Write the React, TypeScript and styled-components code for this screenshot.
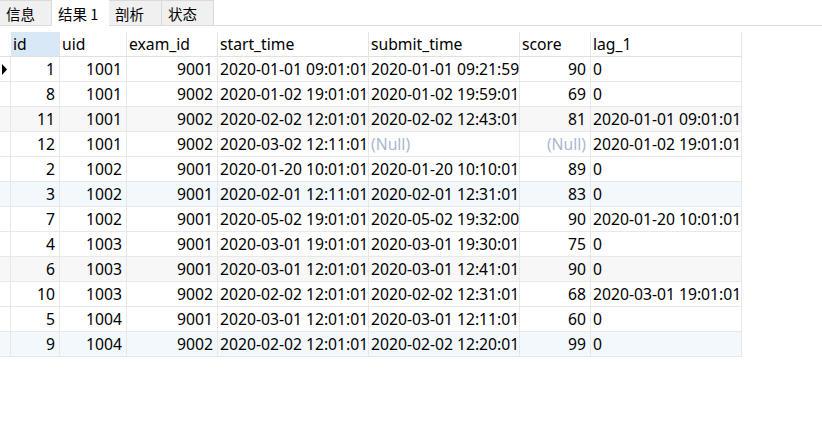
import React from "react";
import styled, { createGlobalStyle } from "styled-components";

const GlobalStyle = createGlobalStyle`
  html, body {
    margin: 0;
    padding: 0;
    background: #ffffff;
  }
  body {
    font-family: "Noto Sans", "Noto Sans CJK SC", sans-serif;
    color: #000;
  }
`;

type Col = { key: string; width: number; align: "left" | "right" };

const COLUMNS: Col[] = [
  { key: "id", width: 49, align: "right" },
  { key: "uid", width: 67, align: "right" },
  { key: "exam_id", width: 91, align: "right" },
  { key: "start_time", width: 151, align: "left" },
  { key: "submit_time", width: 151, align: "left" },
  { key: "score", width: 71, align: "right" },
  { key: "lag_1", width: 151, align: "left" }
];

type Tone = "white" | "gray" | "blue";

const ROWS: { cells: (string | null)[]; tone: Tone }[] = [
  { cells: ["1", "1001", "9001", "2020-01-01 09:01:01", "2020-01-01 09:21:59", "90", "0"], tone: "white" },
  { cells: ["8", "1001", "9002", "2020-01-02 19:01:01", "2020-01-02 19:59:01", "69", "0"], tone: "white" },
  { cells: ["11", "1001", "9002", "2020-02-02 12:01:01", "2020-02-02 12:43:01", "81", "2020-01-01 09:01:01"], tone: "gray" },
  { cells: ["12", "1001", "9002", "2020-03-02 12:11:01", null, null, "2020-01-02 19:01:01"], tone: "white" },
  { cells: ["2", "1002", "9001", "2020-01-20 10:01:01", "2020-01-20 10:10:01", "89", "0"], tone: "white" },
  { cells: ["3", "1002", "9001", "2020-02-01 12:11:01", "2020-02-01 12:31:01", "83", "0"], tone: "blue" },
  { cells: ["7", "1002", "9001", "2020-05-02 19:01:01", "2020-05-02 19:32:00", "90", "2020-01-20 10:01:01"], tone: "white" },
  { cells: ["4", "1003", "9001", "2020-03-01 19:01:01", "2020-03-01 19:30:01", "75", "0"], tone: "white" },
  { cells: ["6", "1003", "9001", "2020-03-01 12:01:01", "2020-03-01 12:41:01", "90", "0"], tone: "gray" },
  { cells: ["10", "1003", "9002", "2020-02-02 12:01:01", "2020-02-02 12:31:01", "68", "2020-03-01 19:01:01"], tone: "white" },
  { cells: ["5", "1004", "9001", "2020-03-01 12:01:01", "2020-03-01 12:11:01", "60", "0"], tone: "white" },
  { cells: ["9", "1004", "9002", "2020-02-02 12:01:01", "2020-02-02 12:20:01", "99", "0"], tone: "blue" }
];

const TONE_BG: Record<Tone, string> = {
  white: "#ffffff",
  gray: "#f7f7f7",
  blue: "#f3f8fd"
};

const TABS = ["信息", "结果 1", "剖析", "状态"];
const TAB_WIDTHS = [52, 57, 53, 52];

const Page = styled.div`
  width: 822px;
  height: 441px;
  overflow: hidden;
`;

const TabBar = styled.div`
  display: flex;
  height: 26px;
  box-sizing: border-box;
  border-bottom: 1px solid #dcdcdc;
  font-family: "Noto Sans CJK SC", sans-serif;
`;

const Tab = styled.div<{ $active: boolean; $w: number }>`
  width: ${p => p.$w}px;
  box-sizing: border-box;
  height: ${p => (p.$active ? 26 : 25)}px;
  padding-left: 6px;
  display: flex;
  align-items: center;
  font-size: 14.5px;
  background: ${p => (p.$active ? "#ffffff" : "#f0f0f0")};
  border-right: 1px solid ${p => (p.$active ? "#ffffff" : "#dadada")};
  border-top: 1px solid ${p => (p.$active ? "#ffffff" : "#dadada")};
  color: #000;
`;

const Grid = styled.div`
  margin-top: 6px;
  display: flex;
  flex-direction: column;
  width: max-content;
`;

const Row = styled.div<{ $tone: Tone }>`
  display: flex;
  height: 25px;
  box-sizing: border-box;
  border-bottom: 1px solid #e8e8e8;
  background: ${p => TONE_BG[p.$tone]};
`;

const HeaderRow = styled.div`
  display: flex;
  height: 25px;
  box-sizing: border-box;
  border-bottom: 1px solid #e0e0e0;
  background: #ffffff;
`;

const Indicator = styled.div<{ $header?: boolean }>`
  width: 11px;
  box-sizing: border-box;
  border-right: 1px solid ${p => (p.$header ? "#ffffff" : "#e8e8e8")};
  display: flex;
  align-items: center;
  padding-left: 2px;
`;

const Cell = styled.div<{ $w: number; $align: "left" | "right"; $null?: boolean }>`
  width: ${p => p.$w}px;
  box-sizing: border-box;
  border-right: 1px solid #e8e8e8;
  padding: 0 ${p => (p.$align === "right" ? 4 : 0)}px 0 ${p => (p.$align === "left" ? 2 : 0)}px;
  display: flex;
  align-items: center;
  justify-content: ${p => (p.$align === "right" ? "flex-end" : "flex-start")};
  white-space: nowrap;
  overflow: hidden;
  font-size: 15.7px;
  color: ${p => (p.$null ? "#a9b7cf" : "#000000")};
`;

const HeadCell = styled.div<{ $w: number; $selected?: boolean }>`
  width: ${p => p.$w}px;
  box-sizing: border-box;
  border-right: 1px solid #e4e4e4;
  padding-left: 2px;
  display: flex;
  align-items: center;
  white-space: nowrap;
  overflow: hidden;
  font-size: 15.7px;
  background: ${p => (p.$selected ? "#d9e8f6" : "#ffffff")};
`;

const Pointer = () => (
  <svg width="5" height="11" viewBox="0 0 5 11">
    <path d="M0 0 L5 5.5 L0 11 Z" fill="#000" />
  </svg>
);

export default function App() {
  return (
    <Page>
      <GlobalStyle />
      <TabBar>
        {TABS.map((t, i) => (
          <Tab key={t} $active={i === 1} $w={TAB_WIDTHS[i]}>
            {t}
          </Tab>
        ))}
      </TabBar>
      <Grid>
        <HeaderRow>
          <Indicator $header />
          {COLUMNS.map((c, i) => (
            <HeadCell key={c.key} $w={c.width} $selected={i === 0}>
              {c.key}
            </HeadCell>
          ))}
        </HeaderRow>
        {ROWS.map((r, ri) => (
          <Row key={ri} $tone={r.tone}>
            <Indicator>{ri === 0 && <Pointer />}</Indicator>
            {r.cells.map((v, ci) => (
              <Cell key={ci} $w={COLUMNS[ci].width} $align={COLUMNS[ci].align} $null={v === null}>
                {v === null ? "(Null)" : v}
              </Cell>
            ))}
          </Row>
        ))}
      </Grid>
    </Page>
  );
}
